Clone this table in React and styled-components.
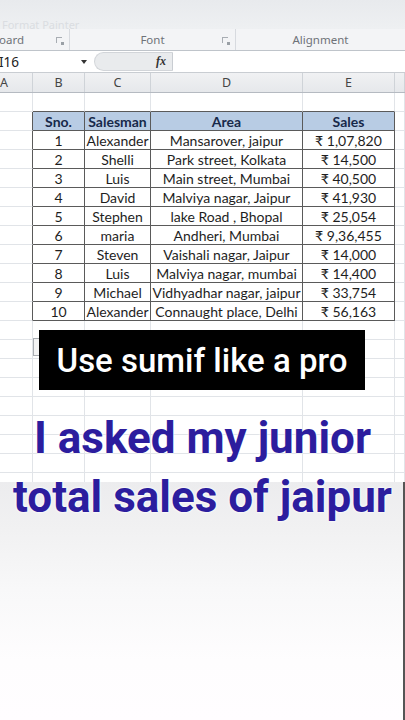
import React from "react";
import styled, { createGlobalStyle } from "styled-components";

const Global = createGlobalStyle`
  html, body { margin: 0; padding: 0; background: #fff; }
  body { width: 405px; height: 720px; overflow: hidden; font-family: "Lato", "Liberation Sans", sans-serif; }
  * { box-sizing: border-box; }
`;

const Page = styled.div`
  position: relative;
  width: 405px;
  height: 720px;
  overflow: hidden;
  background: #fff;
  display: flex;
  flex-direction: column;
`;

const RibbonTop = styled.div`
  height: 29px;
  background: linear-gradient(#e8eaed, #eef0f2);
  position: relative;
  flex: none;
`;

const GhostLabel = styled.span`
  position: absolute;
  left: 2px;
  top: 17px;
  font-family: "Noto Sans", "Liberation Sans", sans-serif;
  font-size: 11px;
  color: #dadde1;
`;

const RibbonGroups = styled.div`
  height: 22px;
  flex: none;
  display: grid;
  grid-template-columns: 70px 166px 169px;
  background: #f3f4f6;
  border-bottom: 1px solid #bfc4ca;
`;

const Group = styled.div`
  position: relative;
  display: flex;
  align-items: center;
  justify-content: ${(p) => p.$align || "center"};
  font-family: "Noto Sans", "Liberation Sans", sans-serif;
  font-size: 11.5px;
  color: #6e7278;
  border-right: ${(p) => (p.$sep ? "1px solid #d7dadf" : "none")};
`;

const CutLabel = styled.span`
  margin-left: -1px;
`;

const Launcher = styled.span`
  position: absolute;
  right: 7px;
  top: 8px;
  width: 6px;
  height: 6px;
  border-top: 1px solid #a8adb3;
  border-left: 1px solid #a8adb3;
  &::after {
    content: "";
    position: absolute;
    right: -2px;
    bottom: -2px;
    width: 3px;
    height: 3px;
    background: #9aa0a6;
  }
`;

const FormulaBar = styled.div`
  height: 22px;
  flex: none;
  display: flex;
  align-items: center;
  background: #fff;
  border-bottom: 1px solid #c9cdd2;
`;

const NameBox = styled.div`
  width: 95px;
  display: flex;
  align-items: center;
  justify-content: space-between;
  padding-right: 5px;
  font-family: "Noto Sans", "Liberation Sans", sans-serif;
  font-size: 13.5px;
  color: #222;
  margin-left: -1px;
`;

const Caret = styled.span`
  width: 0;
  height: 0;
  border-left: 3.5px solid transparent;
  border-right: 3.5px solid transparent;
  border-top: 4px solid #333;
  margin-right: 2px;
`;

const Pill = styled.div`
  width: 79px;
  height: 19px;
  border-radius: 10px 0 0 10px;
  background: #e9ebed;
  border: 1px solid #d2d5d9;
  border-right: 1px solid #c9cdd2;
  display: flex;
  align-items: center;
  justify-content: flex-end;
  padding-right: 6px;
  font-family: "Liberation Serif", serif;
  font-style: italic;
  font-weight: bold;
  font-size: 12px;
  color: #333;
`;

const ColHeaders = styled.div`
  height: 20px;
  flex: none;
  display: grid;
  grid-template-columns: 33px 52px 66px 152px 92px 10px;
  background: linear-gradient(#f0f1f3, #e6e8eb);
  border-bottom: 1px solid #b5bac1;
`;

const ColHead = styled.div`
  display: flex;
  align-items: center;
  justify-content: ${(p) => (p.$left ? "flex-start" : "center")};
  font-family: "Noto Sans", "Liberation Sans", sans-serif;
  font-size: 12.5px;
  color: #444;
  border-right: 1px solid #cfd3d8;
`;

const Sheet = styled.div`
  flex: 1;
  display: grid;
  grid-template-columns: 33px 52px 66px 152px 92px 10px;
  grid-auto-rows: 19px;
  align-content: start;
`;

const Cell = styled.div`
  display: flex;
  align-items: center;
  justify-content: center;
  border-right: 1px solid ${(p) => p.$r || "#e1e4e8"};
  border-bottom: 1px solid ${(p) => p.$b || "#e1e4e8"};
  background: ${(p) => (p.$head ? "#b8cce4" : "transparent")};
  font-family: "Lato", "Liberation Sans", "Noto Sans", sans-serif;
  font-size: 14px;
  font-weight: ${(p) => (p.$head ? 700 : 400)};
  color: ${(p) => (p.$head ? "#17294a" : "#1e1e1e")};
  white-space: nowrap;
  overflow: visible;
`;

const Caption = styled.div`
  position: absolute;
  left: 39px;
  top: 330px;
  width: 326px;
  height: 60px;
  background: #000;
  color: #fff;
  display: flex;
  align-items: center;
  justify-content: center;
  font-family: "Roboto", sans-serif;
  font-size: 33px;
  font-weight: 500;
`;

const Stub = styled.div`
  position: absolute;
  left: 33px;
  top: 338px;
  width: 8px;
  height: 18px;
  border: 1px solid #a9adb2;
  border-right: none;
  background: #f4f4f4;
`;

const Fade = styled.div`
  position: absolute;
  left: 0;
  right: 0;
  top: 482px;
  bottom: 0;
  background: linear-gradient(#ececee 0%, #f1f1f2 20%, #f8f8f9 45%, #fefdfe 75%, #fffdff 100%);
  border-right: 2px solid #555;
`;

const Headline = styled.div`
  position: absolute;
  left: 0;
  right: 0;
  top: ${(p) => p.$top}px;
  text-align: center;
  font-family: "Roboto", sans-serif;
  font-weight: 700;
  font-size: ${(p) => p.$size}px;
  color: #2c1d9e;
  line-height: 1;
  text-shadow: 0 0 2px #fff, 0 0 3px #fff;
  white-space: nowrap;
`;

const rows = [
  ["1", "Alexander", "Mansarover, jaipur", "₹ 1,07,820"],
  ["2", "Shelli", "Park street, Kolkata", "₹ 14,500"],
  ["3", "Luis", "Main street, Mumbai", "₹ 40,500"],
  ["4", "David", "Malviya nagar, Jaipur", "₹ 41,930"],
  ["5", "Stephen", "lake Road , Bhopal", "₹ 25,054"],
  ["6", "maria", "Andheri, Mumbai", "₹ 9,36,455"],
  ["7", "Steven", "Vaishali nagar, Jaipur", "₹ 14,000"],
  ["8", "Luis", "Malviya nagar, mumbai", "₹ 14,400"],
  ["9", "Michael", "Vidhyadhar nagar, jaipur", "₹ 33,754"],
  ["10", "Alexander", "Connaught place, Delhi", "₹ 56,163"],
];

const DARK = "#5a5a5a";

function buildSheet() {
  const grid = [];
  const table = [["Sno.", "Salesman", "Area", "Sales"], ...rows];
  const totalRows = 34;
  for (let r = 0; r < totalRows; r++) {
    const t = r - 1;
    const inTable = t >= 0 && t < table.length;
    const aboveTable = r === 0;
    for (let c = 0; c < 6; c++) {
      const tc = c - 1;
      const inCol = tc >= 0 && tc < 4;
      let rColor, bColor, text = "", head = false;
      if (inTable && (inCol || c === 0)) rColor = DARK;
      if (inTable && inCol) {
        bColor = DARK;
        text = table[t][tc];
        head = t === 0;
      }
      if (aboveTable && inCol) bColor = DARK;
      grid.push(
        <Cell key={`${r}-${c}`} $r={rColor} $b={bColor} $head={head}>
          {text}
        </Cell>
      );
    }
  }
  return grid;
}

export default function App() {
  return (
    <Page>
      <Global />
      <RibbonTop>
        <GhostLabel>Format Painter</GhostLabel>
      </RibbonTop>
      <RibbonGroups>
        <Group $align="flex-start" $sep>
          <CutLabel>oard</CutLabel>
          <Launcher />
        </Group>
        <Group $sep>
          Font
          <Launcher />
        </Group>
        <Group>Alignment</Group>
      </RibbonGroups>
      <FormulaBar>
        <NameBox>
          <span>I16</span>
          <Caret />
        </NameBox>
        <Pill>fx</Pill>
      </FormulaBar>
      <ColHeaders>
        <ColHead $left>A</ColHead>
        <ColHead>B</ColHead>
        <ColHead>C</ColHead>
        <ColHead>D</ColHead>
        <ColHead>E</ColHead>
        <ColHead />
      </ColHeaders>
      <Sheet>{buildSheet()}</Sheet>
      <Stub />
      <Caption>Use sumif like a pro</Caption>
      <Fade />
      <Headline $top={416} $size={44}>I asked my junior</Headline>
      <Headline $top={475} $size={44}>total sales of jaipur</Headline>
    </Page>
  );
}
